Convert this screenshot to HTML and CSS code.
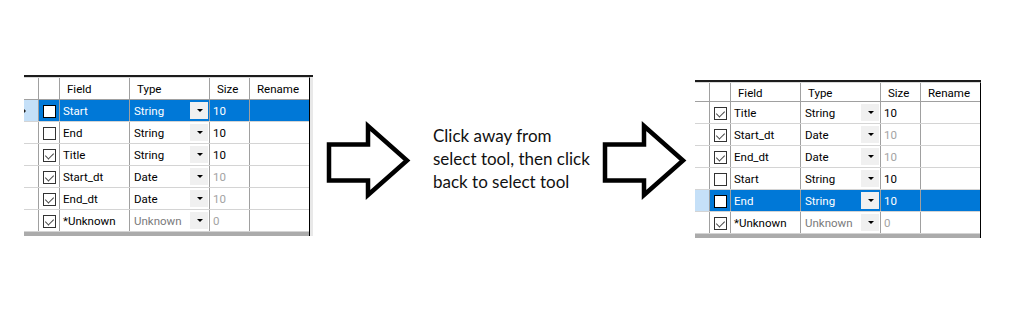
FILE: index.html
```html
<!DOCTYPE html>
<html>
<head>
<meta charset="utf-8">
<link rel="stylesheet" href="styles.css">
</head>
<body>
<div class="canvas">
  <div class="frame frame-left">
    <div class="grid">
      <div class="row head">
        <div class="c rh"></div><div class="c chk"></div><div class="c field">Field</div><div class="c type">Type</div><div class="c size">Size</div><div class="c ren">Rename</div>
      </div>
      <div class="row sel">
        <div class="c rh cur"></div><div class="c chk"><span class="box"></span></div><div class="c field">Start</div><div class="c type"><span>String</span><span class="dd"></span></div><div class="c size">10</div><div class="c ren"></div>
      </div>
      <div class="row">
        <div class="c rh"></div><div class="c chk"><span class="box"></span></div><div class="c field">End</div><div class="c type"><span>String</span><span class="dd"></span></div><div class="c size">10</div><div class="c ren"></div>
      </div>
      <div class="row">
        <div class="c rh"></div><div class="c chk"><span class="box on"></span></div><div class="c field">Title</div><div class="c type"><span>String</span><span class="dd"></span></div><div class="c size">10</div><div class="c ren"></div>
      </div>
      <div class="row">
        <div class="c rh"></div><div class="c chk"><span class="box on"></span></div><div class="c field">Start_dt</div><div class="c type"><span>Date</span><span class="dd"></span></div><div class="c size dim">10</div><div class="c ren"></div>
      </div>
      <div class="row">
        <div class="c rh"></div><div class="c chk"><span class="box on"></span></div><div class="c field">End_dt</div><div class="c type"><span>Date</span><span class="dd"></span></div><div class="c size dim">10</div><div class="c ren"></div>
      </div>
      <div class="row">
        <div class="c rh"></div><div class="c chk"><span class="box on"></span></div><div class="c field">*Unknown</div><div class="c type"><span class="grey">Unknown</span><span class="dd"></span></div><div class="c size dim">0</div><div class="c ren"></div>
      </div>
      <div class="hbar"></div>
    </div>
  </div>

  <svg class="arrow arrow-a" width="90" height="86" viewBox="0 0 90 86">
    <polygon points="5,24.5 44,24.5 44,6 83,40.5 44,75 44,60.5 5,60.5" fill="none" stroke="#000" stroke-width="4.5" stroke-linejoin="miter"/>
  </svg>

  <p class="note">Click away from<br>select tool, then click<br>back to select tool</p>

  <svg class="arrow arrow-b" width="90" height="86" viewBox="0 0 90 86">
    <polygon points="5,24.5 44,24.5 44,6 83,40.5 44,75 44,60.5 5,60.5" fill="none" stroke="#000" stroke-width="4.5" stroke-linejoin="miter"/>
  </svg>

  <div class="frame frame-right">
    <div class="grid">
      <div class="row head">
        <div class="c rh"></div><div class="c chk"></div><div class="c field">Field</div><div class="c type">Type</div><div class="c size">Size</div><div class="c ren">Rename</div>
      </div>
      <div class="row">
        <div class="c rh"></div><div class="c chk"><span class="box on"></span></div><div class="c field">Title</div><div class="c type"><span>String</span><span class="dd"></span></div><div class="c size">10</div><div class="c ren"></div>
      </div>
      <div class="row">
        <div class="c rh"></div><div class="c chk"><span class="box on"></span></div><div class="c field">Start_dt</div><div class="c type"><span>Date</span><span class="dd"></span></div><div class="c size dim">10</div><div class="c ren"></div>
      </div>
      <div class="row">
        <div class="c rh"></div><div class="c chk"><span class="box on"></span></div><div class="c field">End_dt</div><div class="c type"><span>Date</span><span class="dd"></span></div><div class="c size dim">10</div><div class="c ren"></div>
      </div>
      <div class="row">
        <div class="c rh"></div><div class="c chk"><span class="box"></span></div><div class="c field">Start</div><div class="c type"><span>String</span><span class="dd"></span></div><div class="c size">10</div><div class="c ren"></div>
      </div>
      <div class="row sel">
        <div class="c rh"></div><div class="c chk"><span class="box"></span></div><div class="c field">End</div><div class="c type"><span>String</span><span class="dd"></span></div><div class="c size">10</div><div class="c ren"></div>
      </div>
      <div class="row">
        <div class="c rh"></div><div class="c chk"><span class="box on"></span></div><div class="c field">*Unknown</div><div class="c type"><span class="grey">Unknown</span><span class="dd"></span></div><div class="c size dim">0</div><div class="c ren"></div>
      </div>
      <div class="hbar"></div>
    </div>
  </div>
</div>
</body>
</html>
```

FILE: styles.css
```css
html, body {
  margin: 0;
  padding: 0;
  background: #fff;
}

.canvas {
  display: flex;
  align-items: flex-start;
  width: 1031px;
  height: 332px;
  font-family: Roboto, "Liberation Sans", sans-serif;
}

/* ---------- grid frames ---------- */
.frame {
  border-top: 2px solid #1c1c1c;
  flex: none;
}

.frame-left {
  margin-left: 24px;
  margin-top: 75px;
  padding-right: 3px;
  background: #e8e8e8;
}

.frame-right {
  margin-left: 5px;
  margin-top: 80px;
}

.grid {
  display: flex;
  flex-direction: column;
  background: #fff;
  border-top: 1px solid #d8d8d8;
  border-right: 1px solid #000;
}

.row {
  display: flex;
  height: 22px;
  box-sizing: border-box;
  border-bottom: 1px solid #d4d4d4;
  font-size: 11.5px;
  color: #000;
}

.row.head {
  height: 22px;
  border-bottom-color: #a0a0a0;
}

.frame-right .row.head {
  height: 19px;
}

.c {
  box-sizing: border-box;
  height: 100%;
  border-right: 1px solid #a0a0a0;
  display: flex;
  align-items: center;
  padding-left: 3px;
  white-space: nowrap;
  overflow: hidden;
}

.rh { width: 15px; padding-left: 0; position: relative; }
.chk { width: 21px; padding-left: 0; justify-content: center; }
.field { width: 70px; }
.type { width: 80px; padding-left: 4px; }
.size { width: 40px; }
.ren { width: 59px; border-right: none; }

.head .c { padding-left: 7px; padding-top: 1px; }
.head .rh, .head .chk { padding-left: 0; }

/* selected row */
.sel .c { background: #0078d7; color: #fff; }
.sel .rh { background: #c5e0f8; }
.sel .size.dim { color: #fff; }

.rh.cur::before {
  content: "";
  position: absolute;
  left: -1px;
  top: 8px;
  border-left: 3px solid #222;
  border-top: 3px solid transparent;
  border-bottom: 3px solid transparent;
}

/* text states */
.dim { color: #a3a3a3; }
.grey { color: #7a7a7a; }

/* combo drop button */
.dd {
  margin-left: auto;
  margin-right: 1px;
  width: 18px;
  height: 17px;
  margin-top: -1px;
  background: #f0f0f0;
  display: flex;
  align-items: center;
  justify-content: center;
  flex: none;
}

.dd::after {
  content: "";
  border-left: 3.5px solid transparent;
  border-right: 3.5px solid transparent;
  border-top: 3.5px solid #000;
  margin-left: 2px;
}

/* checkboxes */
.box {
  width: 13px;
  height: 13px;
  box-sizing: border-box;
  border: 1px solid #333;
  background: #fff;
  position: relative;
  margin-top: 1px;
}

.sel .box { border-color: #000; }

.box.on::after {
  content: "";
  position: absolute;
  left: 3px;
  top: 1px;
  width: 4px;
  height: 7px;
  border-right: 1px solid #444;
  border-bottom: 1px solid #444;
  transform: rotate(45deg);
}

.hbar {
  height: 4px;
  background: #ababab;
}

/* ---------- arrows & note ---------- */
.arrow { flex: none; display: block; margin-top: 120px; }
.arrow-a { margin-left: 11px; }
.arrow-b { margin-left: 7px; }

.note {
  flex: none;
  width: 160px;
  margin: 124px 0 0 19px;
  font-family: Lato, "Open Sans", sans-serif;
  font-size: 17px;
  line-height: 23px;
  color: #111;
}
```
